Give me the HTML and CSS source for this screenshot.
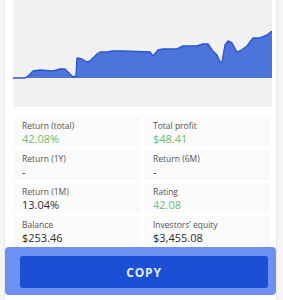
FILE: index.html
```html
<!DOCTYPE html>
<html>
<head>
<meta charset="utf-8">
<link rel="stylesheet" href="styles.css">
</head>
<body>
<div class="card">
  <div class="chart">
    <svg width="259" height="107" viewBox="0 0 259 107">
      <path class="area" d="M0 78 L12 78 L15 76 L20 71 L27 70 L40 71 L47 69 L52 69 L57 74 L60 77 L63 76 L64 58 L69 59 L74 62 L77 61 L84 54 L87 52 L95 52 L99 51 L110 51 L137 52 L140 56 L145 50 L150 49 L164 49 L170 46 L184 46 L190 44 L195 44 L199 50 L204 55 L207 62 L209 62 L212 45 L215 41 L219 43 L224 52 L227 51 L234 46 L240 38 L247 38 L254 35 L259 31 L259 78 Z"/>
      <path class="line" d="M0 78 L12 78 L15 76 L20 71 L27 70 L40 71 L47 69 L52 69 L57 74 L60 77 L63 76 L64 58 L69 59 L74 62 L77 61 L84 54 L87 52 L95 52 L99 51 L110 51 L137 52 L140 56 L145 50 L150 49 L164 49 L170 46 L184 46 L190 44 L195 44 L199 50 L204 55 L207 62 L209 62 L212 45 L215 41 L219 43 L224 52 L227 51 L234 46 L240 38 L247 38 L254 35 L259 31"/>
    </svg>
  </div>
  <div class="stats">
    <div class="cell"><div class="label">Return (total)</div><div class="value green">42.08%</div></div>
    <div class="cell"><div class="label">Total profit</div><div class="value green">$48.41</div></div>
    <div class="cell"><div class="label">Return (1Y)</div><div class="value">-</div></div>
    <div class="cell"><div class="label">Return (6M)</div><div class="value">-</div></div>
    <div class="cell"><div class="label">Return (1M)</div><div class="value">13.04%</div></div>
    <div class="cell"><div class="label">Rating</div><div class="value green">42.08</div></div>
    <div class="cell"><div class="label">Balance</div><div class="value">$253.46</div></div>
    <div class="cell"><div class="label">Investors’ equity</div><div class="value">$3,455.08</div></div>
  </div>
  <div class="copy-wrap">
    <button class="copy">COPY</button>
  </div>
</div>
</body>
</html>
```
FILE: styles.css
```css
html, body {
  margin: 0;
  padding: 0;
  background: #f6f6f6;
  font-family: "Open Sans", "Liberation Sans", sans-serif;
}
.card {
  margin: 0 6px 0 4px;
  height: 300px;
  background: #ffffff;
  border-left: 1px solid #e9e9e9;
  border-right: 1px solid #e9e9e9;
  padding: 0 0 0 0;
  box-sizing: border-box;
}
.chart {
  margin: 0 0 0 8px;
  width: 259px;
  height: 107px;
  background: #f1f1f1;
}
.chart svg { display: block; }
.area { fill: #4d74db; }
.line { fill: none; stroke: #2b56d1; stroke-width: 1.4; stroke-linejoin: round; }
.stats {
  display: grid;
  grid-template-columns: 127px 126px;
  column-gap: 4px;
  row-gap: 3px;
  margin: 10px 0 0 8px;
}
.cell {
  background: #fafafa;
  height: 30px;
  padding: 3px 0 0 9px;
  box-sizing: border-box;
}
.label {
  font-size: 8.5px;
  line-height: 12px;
  color: #555;
}
.value {
  font-size: 11px;
  line-height: 14px;
  color: #2e2e2e;
}
.value.green { color: #6cbf6e; }
.copy-wrap {
  margin: 1px 0 0 0;
  height: 48px;
  background: #6e90f1;
  border-radius: 4px;
  padding: 9px 8px 7px 15px;
  box-sizing: border-box;
}
.copy {
  display: block;
  width: 100%;
  height: 32px;
  border: 0;
  border-radius: 3px;
  background: #1a4fd6;
  color: #e6edff;
  font-family: "Open Sans", "Liberation Sans", sans-serif;
  font-weight: 700;
  font-size: 12px;
  letter-spacing: 0.8px;
  padding: 0;
}
```
